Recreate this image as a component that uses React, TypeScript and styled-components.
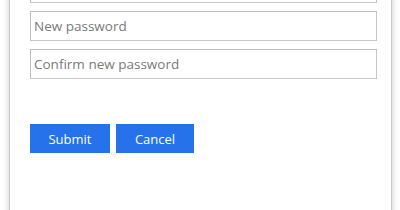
import React from "react";
import styled, { createGlobalStyle } from "styled-components";

const GlobalStyle = createGlobalStyle`
  html, body {
    margin: 0;
    padding: 0;
    background: #ffffff;
    overflow: hidden;
  }
  body {
    font-family: "Open Sans", "Noto Sans", sans-serif;
  }
`;

const Page = styled.div`
  width: 400px;
  height: 210px;
  overflow: hidden;
  box-sizing: border-box;
  padding: 0 8px 0 9px;
`;

const Panel = styled.div`
  box-sizing: border-box;
  width: 383px;
  height: 280px;
  margin-top: -31px;
  background: #ffffff;
  border-left: 1px solid #c9c9c9;
  border-right: 1px solid #c9c9c9;
  box-shadow: 0 0 6px rgba(0, 0, 0, 0.22);
  padding: 4px 0 0 20px;
`;

const Fields = styled.div`
  display: flex;
  flex-direction: column;
  gap: 8px;
`;

const Input = styled.input`
  box-sizing: border-box;
  width: 347px;
  height: 30px;
  margin: 0;
  padding: 0 3px;
  border: 1px solid #c6c6c6;
  border-top-color: #bdbdbd;
  border-left-color: #bdbdbd;
  background: #ffffff;
  font-family: "Open Sans", "Noto Sans", sans-serif;
  font-size: 13.5px;
  color: #333333;
  outline: none;

  &::placeholder {
    color: #7a7a7a;
  }
`;

const Actions = styled.div`
  display: flex;
  gap: 6px;
  margin-top: 45px;
`;

const Button = styled.button<{ $width: number }>`
  box-sizing: border-box;
  width: ${({ $width }) => $width}px;
  height: 29px;
  margin: 0;
  padding: 0;
  border: none;
  background: #2572eb;
  color: #ffffff;
  font-family: "Open Sans", "Noto Sans", sans-serif;
  font-size: 13px;
  cursor: pointer;
`;

export default function App() {
  return (
    <>
      <GlobalStyle />
      <Page>
        <Panel>
          <Fields>
            <Input type="password" placeholder="Current password" />
            <Input type="password" placeholder="New password" />
            <Input type="password" placeholder="Confirm new password" />
          </Fields>
          <Actions>
            <Button $width={80}>Submit</Button>
            <Button $width={78}>Cancel</Button>
          </Actions>
        </Panel>
      </Page>
    </>
  );
}
